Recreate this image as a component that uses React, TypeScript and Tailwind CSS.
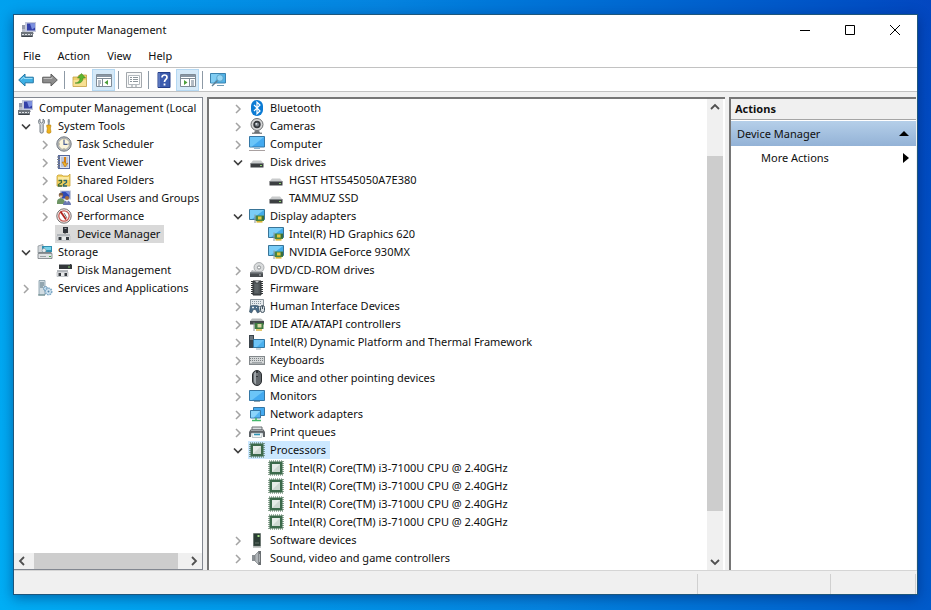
import React, { useState } from "react";

type Node = {
  label: string;
  icon: React.ReactNode;
  open?: boolean;
  leaf?: boolean;
  children?: Node[];
};

type IconProps = { children: React.ReactNode };

function Icon({ children }: IconProps) {
  return (
    <svg className="size-4 shrink-0" viewBox="0 0 16 16" fill="none" aria-hidden="true">
      {children}
    </svg>
  );
}

const computerMgmt = (
  <Icon>
    <path d="M4 0h11v10H4z" fill="#c3c8dc" />
    <path d="M6 1.500h8v7H6z" fill="#3340a8" />
    <path d="M9 1.500h5v4l-3 2z" fill="#7c90e0" />
    <path d="M8 10h4l1 2H7z" fill="#8e93a3" />
    <path d="M1 3h3v7H1z" fill="#b9bdc9" />
    <path d="M1 4h3M1 6h3" stroke="#70778a" />
    <path d="M0 10h12v5H0z" fill="#6e757c" />
    <path d="M1 12.500h2M4 12.500h2M7 12.500h2M10 12.500h1" stroke="#dfe2e6" />
    <path d="M1 14.500h10" stroke="#3c4248" />
  </Icon>
);

const tools = (
  <Icon>
    <path d="M3 1v3l1.500 1L6 4V1c2 1 2 4 .2 5.500V14c0 1.500-3.200 1.500-3.200 0V6.500C1 5 1 2 3 1z" fill="#d3d7da" stroke="#69727a" strokeWidth=".9" />
    <path d="M11 1h1.500l.5 2-.5 4h-1.500l-.5-4z" fill="#8f979d" />
    <path d="M9.800 7h4v2l-.5 1 .7 4c0 1.700-4.200 1.700-4.200 0l.6-4-.6-1z" fill="#eeb21c" stroke="#b47e0c" strokeWidth=".6" />
  </Icon>
);

const clock = (
  <Icon>
    <circle cx="8" cy="8" r="7.200" fill="#b9bec4" stroke="#72787f" />
    <circle cx="8" cy="8" r="5.500" fill="#fbf5dc" stroke="#918f86" strokeWidth=".6" />
    <path d="M8 4v4.300h3.500" stroke="#4b5f94" strokeWidth="1.200" />
    <path d="M8 3v1M8 12v1M3 8h1M12 8h1" stroke="#9a9a90" />
  </Icon>
);

const eventViewer = (
  <Icon>
    <path d="M2 1h12v14H2z" fill="#56689d" />
    <path d="M4 2h9v12H4z" fill="#dfe4ee" />
    <path d="M5 4h7M5 6h7M5 8h7M5 10h7M5 12h7" stroke="#8a97b8" strokeWidth=".8" />
    <path d="M1 3h3M1 5.500h3M1 8h3M1 10.500h3M1 13h3" stroke="#7e838d" />
    <path d="M9 3v6" stroke="#d57c10" strokeWidth="2" />
    <path d="M6 8l3 5 3-4-2 1-1-2z" fill="#f2b325" stroke="#a35e0c" strokeWidth=".5" />
  </Icon>
);

const sharedFolder = (
  <Icon>
    <path d="M1 4l1-1h4l1 1h5l2-2v12H1z" fill="#f2d160" stroke="#c9a23a" strokeWidth=".8" />
    <path d="M2 5h11v3H2z" fill="#fbe9a0" />
    <path d="M2.500 8.500h3v2l-3 2v1.500h3.500" stroke="#3f6b3a" strokeWidth="1.300" />
    <path d="M7.500 8.500h3v2l-3 2v1.500H11" stroke="#2f6a6f" strokeWidth="1.300" />
  </Icon>
);

const users = (
  <Icon>
    <path d="M4 .5h11v9H4z" fill="#c3c9da" />
    <path d="M5.500 1.500h8v7h-8z" fill="#2f49b4" />
    <path d="M9 1.500h4.500v4z" fill="#7c90e0" />
    <circle cx="5" cy="5" r="2.300" fill="#7b5a42" />
    <path d="M3.500 5.500c0 3 3 3 3 0z" fill="#e9bd91" />
    <path d="M1 12c0-5 7-5 8 0v2H1z" fill="#6d9464" />
    <circle cx="11" cy="8" r="2" fill="#a76d3c" />
    <path d="M7 15c0-6 8-6 8 0z" fill="#6a79b3" />
    <path d="M10 10l1 3 1-3z" fill="#fff" />
  </Icon>
);

const performance = (
  <Icon>
    <circle cx="8" cy="8" r="7.200" fill="#f7f2f1" stroke="#746d6d" />
    <circle cx="8" cy="8" r="5.200" fill="#fff" stroke="#c65c55" strokeWidth="1.300" />
    <path d="M4.500 3.500l5.500 8" stroke="#b1231d" strokeWidth="1.800" />
    <path d="M8 5l3 5" stroke="#555" strokeWidth=".8" />
  </Icon>
);

const deviceManager = (
  <Icon>
    <path d="M7 1h5v6H7z" fill="#30343a" />
    <path d="M8.500 2.500h2" stroke="#9ba1a8" />
    <path d="M9 7v2" stroke="#555" />
    <path d="M1 8h13v2H1z" fill="#b4b8bc" />
    <path d="M1 10h13v4.500H1z" fill="#e7e9ea" stroke="#b0b4b7" strokeWidth=".6" />
    <path d="M2.500 11h3v3h-3zM10 11h3v3h-3z" fill="#363b40" />
  </Icon>
);

const storage = (
  <Icon>
    <path d="M1 2l5-1.500v8L1 9z" fill="#d2d7db" stroke="#858c92" strokeWidth=".7" />
    <path d="M5 2h10v6H5z" fill="#318eb0" />
    <path d="M7 3h7v3H8z" fill="#76d1e8" />
    <circle cx="7" cy="6.500" r="2" fill="#e8edf0" stroke="#8a979d" strokeWidth=".6" />
    <path d="M1 9.500h14v5H1z" fill="#dfe2e4" stroke="#757b80" strokeWidth=".8" />
    <path d="M1 9h14l-1-1H2z" fill="#7d858a" />
    <path d="M12 12.500h2" stroke="#47a447" strokeWidth="1.200" />
    <path d="M3 12.500h6" stroke="#9ba1a5" />
  </Icon>
);

const diskMgmt = (
  <Icon>
    <path d="M3 3l1-1h11l1 1v4H3z" fill="#34383b" />
    <path d="M4 2.500h10" stroke="#9a9fa3" />
    <path d="M12 5h2" stroke="#84d06a" />
    <path d="M1 8h11v2H1z" fill="#b4b8bc" />
    <path d="M1 10h11v4.500H1z" fill="#e7e9ea" stroke="#a5aaae" strokeWidth=".6" />
    <path d="M2.500 11H5v3H2.500zM8.500 11H11v3H8.500z" fill="#363b40" />
  </Icon>
);

const services = (
  <Icon>
    <path d="M2 .5h6v14.500H2z" fill="#d1dce2" stroke="#8298a4" strokeWidth=".8" />
    <path d="M3 3h4M3 5h4M3 7h3" stroke="#55707f" />
    <path d="M1 15h7" stroke="#688" />
    <circle cx="8.500" cy="8.500" r="2" fill="#c6dff0" stroke="#739cba" />
    <circle cx="11.500" cy="11.500" r="3.200" fill="#d4e7f4" stroke="#7ba6c4" strokeWidth="1.600" strokeDasharray="1.600 .8" />
    <circle cx="11.500" cy="11.500" r="1" fill="#5484a8" />
  </Icon>
);

const bluetooth = (
  <Icon>
    <rect x="2" width="12" height="16" rx="6" fill="#0b7bd4" />
    <path d="M5 5l6 6-3 2.800V2.200L11 5l-6 6" stroke="#fff" strokeWidth="1.200" />
  </Icon>
);

const camera = (
  <Icon>
    <circle cx="8" cy="6.500" r="6" fill="#d5d6d7" stroke="#6c6f71" />
    <circle cx="8" cy="6.500" r="3.700" fill="#34383c" />
    <circle cx="8" cy="6.500" r="2" fill="#808890" />
    <circle cx="7.300" cy="5.800" r=".9" fill="#e9eef1" />
    <path d="M6 12.500h4l1 2.500H5z" fill="#777b7e" />
    <path d="M3 15.200h10" stroke="#53575a" />
  </Icon>
);

const computer = (
  <Icon>
    <path d="M.5.500h15v10.500H.5z" fill="#44aaf0" stroke="#3577a5" />
    <path d="M1 1h14L3 10.500H1z" fill="#6bc5f8" />
    <path d="M5 12.500h6" stroke="#8ab5d0" />
    <path d="M0 14.500h16" stroke="#a9a1a1" />
  </Icon>
);

const monitor = (
  <Icon>
    <path d="M.5 2.500h15v10H.5z" fill="#44aaf0" stroke="#3577a5" />
    <path d="M1 3h14L3 12H1z" fill="#6bc5f8" />
    <path d="M5 13.500h6" stroke="#8ca4b3" />
  </Icon>
);

const displayAdapter = (
  <Icon>
    <path d="M.5 1.500h15v10H.5z" fill="#43abe9" stroke="#397497" />
    <path d="M1 2h14L3 11H1z" fill="#7acdf7" />
    <path d="M6.500 7.500H15V13H6.500z" fill="#4a8440" />
    <path d="M6 6.500V15" stroke="#8c969c" />
    <path d="M9 8.500h3.500v3H9z" fill="#e1c841" />
    <path d="M7.500 13.800h6" stroke="#d7b32f" strokeWidth="1.600" />
    <path d="M13.500 8h1v4h-1z" fill="#2d5a32" />
  </Icon>
);

const disk = (
  <Icon>
    <path d="M4 6.500h8l2.500 3h-13z" fill="#c9cbcc" />
    <path d="M1.500 9.500h13v4h-13z" fill="#3c3f42" />
    <path d="M1.500 9.500h13" stroke="#7d8184" />
    <path d="M11 11.500h2" stroke="#89d26c" />
  </Icon>
);

const dvd = (
  <Icon>
    <circle cx="10" cy="5.500" r="5" fill="#d9dbdc" stroke="#989c9e" strokeWidth=".8" />
    <circle cx="10" cy="5.500" r="1.600" fill="#fff" stroke="#8b9092" />
    <path d="M3 8l-2 3h13l-2-2H6z" fill="#b4b7b9" />
    <path d="M1 10.500h13V15H1z" fill="#494d50" />
    <path d="M1 11h13" stroke="#7c8184" />
    <path d="M10 13h2" stroke="#bfc4c6" />
  </Icon>
);

const firmware = (
  <Icon>
    <path d="M2 1.500h2M2 3.500h2M2 5.500h2M2 7.500h2M2 9.500h2M2 11.500h2M2 13.500h2M12 1.500h2M12 3.500h2M12 5.500h2M12 7.500h2M12 9.500h2M12 11.500h2M12 13.500h2" stroke="#35393b" />
    <path d="M4 1h8v14H4z" fill="#4d5356" stroke="#2c3032" />
    <path d="M6 1h4L8 3z" fill="#c2c5c7" />
    <path d="M5.500 4h4v9h-4z" fill="#5d6467" />
  </Icon>
);

const hid = (
  <Icon>
    <path d="M1.500 1.500h13v7h-13z" fill="#e5e9ec" stroke="#8d979e" />
    <path d="M3 3.500h10M3 5.500h10" stroke="#87949d" strokeDasharray="1 1" />
    <path d="M.5 14l1-6 2-.5h4l2 .5 1 6-2 1-2-3.500h-2L2.500 15z" fill="#4a6b87" stroke="#34495a" strokeWidth=".6" />
    <path d="M3 9.500h2M4 8.500v2M7 9.500h1" stroke="#fff" strokeWidth=".8" />
    <rect x="11.500" y="7.500" width="4" height="7" rx="2" fill="#d6dde2" stroke="#41525f" />
    <path d="M13.500 8v3" stroke="#41525f" />
  </Icon>
);

const ide = (
  <Icon>
    <path d="M3 2.500h9l3 2.500H1z" fill="#b6b9bb" />
    <path d="M1 5h14v3.500H1z" fill="#45494c" />
    <path d="M5.500 7h9v6h-9z" fill="#3f7b40" />
    <path d="M5 6.500V15" stroke="#8d9396" />
    <path d="M8.500 8h4v3.500h-4z" fill="#d7d7a5" />
    <path d="M7 14h6" stroke="#d5ae32" strokeWidth="1.400" />
  </Icon>
);

const platform = (
  <Icon>
    <path d="M0 1h5v13H0z" fill="#3b444b" />
    <path d="M1 3h3M1 5h3" stroke="#9da9b1" />
    <path d="M4.500 5.500h11v8h-11z" fill="#4bb0ee" stroke="#3477a2" />
    <path d="M5 6h10l-7 7H5z" fill="#6ec4f6" />
    <path d="M7 15h5" stroke="#91a9b8" />
  </Icon>
);

const keyboard = (
  <Icon>
    <path d="M0 4h16v9H0z" fill="#83888b" />
    <path d="M1 5h14v6.500H1z" fill="#d5d8d9" />
    <path d="M1 6.500h14M1 8.500h14" stroke="#7e8386" strokeDasharray="1 1" />
    <path d="M3 10.500h10" stroke="#a0a5a8" />
  </Icon>
);

const mouse = (
  <Icon>
    <rect x="3.500" y=".5" width="9" height="15" rx="4.500" fill="#62676b" stroke="#2a2e31" />
    <path d="M5 4c0-2 2-2.500 2-2.500V14c-1 0-2-2-2-3z" fill="#a0a6aa" />
    <path d="M8 1v6" stroke="#1f2326" strokeWidth="1.400" />
    <path d="M8 3v3" stroke="#d8dbdd" strokeWidth=".8" />
  </Icon>
);

const network = (
  <Icon>
    <path d="M4.500 1.500h11v8h-11z" fill="#44aaf0" stroke="#3577a5" />
    <path d="M1.500 4.500h10V12h-10z" fill="#55b4f2" stroke="#3577a5" />
    <path d="M2 5h9l-6 6.500H2z" fill="#8bd4fb" />
    <path d="M7 12v2M3 14.500h9" stroke="#43b86a" strokeWidth="1.600" />
  </Icon>
);

const printer = (
  <Icon>
    <path d="M3 3h10v3H3z" fill="#d9dddf" stroke="#6b7073" />
    <path d="M1.500 5.500h13L16 8v5h-2V9H2v4H0V8z" fill="#5d6266" />
    <path d="M2 6.500h12" stroke="#9da3a7" />
    <path d="M2.500 9h11l-1 4.500h-9z" fill="#f3f7f8" stroke="#92a2a7" strokeWidth=".6" />
    <path d="M5 10.500h6" stroke="#2f93b4" strokeWidth="1.600" />
  </Icon>
);

const cpu = (
  <Icon>
    <path d="M1 1h14v14H1z" stroke="#456b50" strokeWidth="1.200" strokeDasharray="1 1" />
    <path d="M1.500 1.500h13v13h-13z" fill="#3c6a4b" />
    <path d="M4 4h8v8H4z" fill="#cdd8d1" />
    <path d="M4 12V4h8z" fill="#e6ece8" />
  </Icon>
);

const software = (
  <Icon>
    <path d="M4.500 1.500h7V14h-7z" fill="#2b3d35" stroke="#56615c" strokeWidth=".6" />
    <path d="M8.500 3h2v2h-2z" fill="#a3e286" />
    <path d="M6 11h4" stroke="#65736b" />
    <path d="M4 15h8" stroke="#8f9592" />
  </Icon>
);

const sound = (
  <Icon>
    <path d="M3 5h3v6H3z" fill="#8a9094" />
    <path d="M6 5l4-4v14l-4-4z" fill="#b1b6b9" stroke="#7b8083" strokeWidth=".7" />
    <path d="M9.500 1H12v14H9.500z" fill="#6a6f72" />
    <path d="M10.500 4v8" stroke="#a9aeb1" />
  </Icon>
);

const consoleTree: Node[] = [
  {
    label: "System Tools",
    icon: tools,
    open: true,
    children: [
      { label: "Task Scheduler", icon: clock },
      { label: "Event Viewer", icon: eventViewer },
      { label: "Shared Folders", icon: sharedFolder },
      { label: "Local Users and Groups", icon: users },
      { label: "Performance", icon: performance },
      { label: "Device Manager", icon: deviceManager, leaf: true },
    ],
  },
  {
    label: "Storage",
    icon: storage,
    open: true,
    children: [{ label: "Disk Management", icon: diskMgmt, leaf: true }],
  },
  { label: "Services and Applications", icon: services },
];

const core: Node = { label: "Intel(R) Core(TM) i3-7100U CPU @ 2.40GHz", icon: cpu, leaf: true };

const devices: Node[] = [
  { label: "Bluetooth", icon: bluetooth },
  { label: "Cameras", icon: camera },
  { label: "Computer", icon: computer },
  {
    label: "Disk drives",
    icon: disk,
    open: true,
    children: [
      { label: "HGST HTS545050A7E380", icon: disk, leaf: true },
      { label: "TAMMUZ SSD", icon: disk, leaf: true },
    ],
  },
  {
    label: "Display adapters",
    icon: displayAdapter,
    open: true,
    children: [
      { label: "Intel(R) HD Graphics 620", icon: displayAdapter, leaf: true },
      { label: "NVIDIA GeForce 930MX", icon: displayAdapter, leaf: true },
    ],
  },
  { label: "DVD/CD-ROM drives", icon: dvd },
  { label: "Firmware", icon: firmware },
  { label: "Human Interface Devices", icon: hid },
  { label: "IDE ATA/ATAPI controllers", icon: ide },
  { label: "Intel(R) Dynamic Platform and Thermal Framework", icon: platform },
  { label: "Keyboards", icon: keyboard },
  { label: "Mice and other pointing devices", icon: mouse },
  { label: "Monitors", icon: monitor },
  { label: "Network adapters", icon: network },
  { label: "Print queues", icon: printer },
  { label: "Processors", icon: cpu, open: true, children: [core, core, core, core] },
  { label: "Software devices", icon: software },
  { label: "Sound, video and game controllers", icon: sound },
];

type TreeItemProps = {
  node: Node;
  selected: string;
  selectedClass: string;
  onSelect: (label: string) => void;
};

function TreeItem({ node, selected, selectedClass, onSelect }: TreeItemProps) {
  const [open, setOpen] = useState(Boolean(node.open));

  return (
    <li>
      <div className="flex h-[18px] items-center">
        {node.leaf ? (
          <span className="w-[18px] shrink-0" />
        ) : (
          <button
            type="button"
            aria-label={`Toggle ${node.label}`}
            onClick={() => setOpen(!open)}
            className="flex w-[18px] shrink-0 pl-0.5 pt-0.5"
          >
            <svg className="size-3" viewBox="0 0 12 12" fill="none">
              {open ? (
                <path d="M2 3.500l4 4 4-4" stroke="#3f3f3f" strokeWidth="1.700" />
              ) : (
                <path d="M4 2l4 4-4 4" stroke="#a3a3a3" strokeWidth="1.500" />
              )}
            </svg>
          </button>
        )}
        <button
          type="button"
          onClick={() => onSelect(node.label)}
          className={`flex h-[18px] items-center gap-[5px] whitespace-nowrap pl-px pr-1 ${
            selected === node.label ? selectedClass : ""
          }`}
        >
          {node.icon}
          {node.label}
        </button>
      </div>
      {open && node.children && (
        <ul className="pl-[19px]">
          {node.children.map((child, i) => (
            <TreeItem key={i} node={child} selected={selected} selectedClass={selectedClass} onSelect={onSelect} />
          ))}
        </ul>
      )}
    </li>
  );
}

type ToolProps = { label: string; active?: boolean; children: React.ReactNode };

function Tool({ label, active, children }: ToolProps) {
  return (
    <button
      type="button"
      aria-label={label}
      className={`flex h-[22px] w-[23px] items-center justify-center border ${
        active ? "border-[#b5d8f2] bg-[#d5e9f8]" : "border-transparent"
      }`}
    >
      {children}
    </button>
  );
}

function Separator() {
  return <span className="mx-0.5 mb-0.5 h-[18px] w-px bg-[#8d99a5]" />;
}

function ScrollArrow({ label, d }: { label: string; d: string }) {
  return (
    <button type="button" aria-label={label} className="flex size-4 shrink-0 items-center justify-center">
      <svg className="size-3" viewBox="0 0 12 12" fill="none">
        <path d={d} stroke="#505050" strokeWidth="1.800" />
      </svg>
    </button>
  );
}

export default function App() {
  const [consoleItem, setConsoleItem] = useState("Device Manager");
  const [device, setDevice] = useState("Processors");

  return (
    <div className="flex h-screen flex-col bg-linear-75 from-[#00aef5] via-[#0583df] to-[#0347c0] px-[13px] pb-[15px] pt-[14px] font-['Noto_Sans',sans-serif] text-[11px] leading-[18px] text-[#101010]">
      <main className="flex min-h-0 flex-1 flex-col border border-[#1d567c] bg-[#f0f0f0] shadow-[0_3px_12px_rgba(0,20,80,0.45)]">
        <header className="flex h-[30px] items-center bg-white pl-[7px]">
          {computerMgmt}
          <h1 className="ml-[5px] flex-1">Computer Management</h1>
          <button type="button" aria-label="Minimize" className="flex w-[45px] justify-center">
            <svg className="size-3" viewBox="0 0 12 12">
              <path d="M1 6.500h10" stroke="#000" />
            </svg>
          </button>
          <button type="button" aria-label="Maximize" className="flex w-[45px] justify-center">
            <svg className="size-3" viewBox="0 0 12 12" fill="none">
              <path d="M1.500 1.500h9v9h-9z" stroke="#000" />
            </svg>
          </button>
          <button type="button" aria-label="Close" className="flex w-[45px] justify-center">
            <svg className="size-3" viewBox="0 0 12 12">
              <path d="M1 1l10 10M11 1L1 11" stroke="#000" />
            </svg>
          </button>
        </header>

        <nav className="flex h-[22px] items-center gap-[17px] bg-white pl-[9px]">
          <button type="button">File</button>
          <button type="button">Action</button>
          <button type="button">View</button>
          <button type="button">Help</button>
        </nav>

        <div className="flex h-[25px] items-end gap-px border-y border-[#c2c2c2] bg-white">
          <Tool label="Back">
            <Icon>
              <path d="M.7 8L7 2v3.200h8.300v5.600H7V14z" fill="#3fb0e4" stroke="#2377a5" />
              <path d="M3 7.500L6 5v1.500h8.500" stroke="#9adbf6" />
            </Icon>
          </Tool>
          <Tool label="Forward">
            <Icon>
              <path d="M15.300 8L9 2v3.200H.7v5.600H9V14z" fill="#8c8c8c" stroke="#5d5d5d" />
              <path d="M1.500 6.500H10V5" stroke="#bcbcbc" />
            </Icon>
          </Tool>
          <Separator />
          <Tool label="Up one level">
            <Icon>
              <path d="M1 5h5l1-2h7.500v11.500H1z" fill="#efd06d" stroke="#c3a044" strokeWidth=".8" />
              <path d="M1.500 8H14v6H1.500z" fill="#f8e092" />
              <path d="M3 11c3 0 5-2 5-5H5.500L9.500 1.500 13.500 6H11c0 4-3 6-8 5z" fill="#5cb531" stroke="#398019" strokeWidth=".5" />
            </Icon>
          </Tool>
          <Tool label="Show or hide console tree" active>
            <Icon>
              <path d="M.5 2.500h15v12H.5z" fill="#fff" stroke="#7f8b96" />
              <path d="M1 3h14v2H1z" fill="#8996a4" />
              <path d="M1 6.500h14M6.500 7v7" stroke="#7f8b96" />
              <path d="M2 9h3M2 11h3M2 13h2" stroke="#68788b" />
              <path d="M12 8v5l-3.500-2.500z" fill="#4c9e3a" />
            </Icon>
          </Tool>
          <Separator />
          <Tool label="Properties">
            <Icon>
              <path d="M.5.500h15v15H.5z" fill="#f9f9f9" stroke="#a3a8ad" />
              <path d="M2.500 3.500h11v9h-11z" fill="#fff" stroke="#b4babf" />
              <path d="M4 5.500h2M7 5.500h5M4 7.500h2M7 7.500h5M4 9.500h2M7 9.500h5M5 14h2M9 14h2" stroke="#8b949a" />
            </Icon>
          </Tool>
          <Separator />
          <Tool label="Help">
            <Icon>
              <path d="M2 .5h12v15H2z" fill="#3c5cae" stroke="#253f89" />
              <path d="M3 1v14" stroke="#7892d1" />
              <path d="M6 5.500c0-3.500 5-3 5-.3C11 7.500 8.500 7.300 8.500 10" stroke="#fff" strokeWidth="1.700" />
              <path d="M7.600 11.500h1.800v2H7.600z" fill="#fff" />
            </Icon>
          </Tool>
          <Tool label="Show or hide action pane" active>
            <Icon>
              <path d="M.5 2.500h15v12H.5z" fill="#fff" stroke="#7f8b96" />
              <path d="M1 3h14v2H1z" fill="#8996a4" />
              <path d="M1 6.500h14M9.500 7v7" stroke="#7f8b96" />
              <path d="M11 9h3M11 11h3M11 13h3" stroke="#68788b" />
              <path d="M4 8v5l3.500-2.500z" fill="#4c9e3a" />
            </Icon>
          </Tool>
          <Separator />
          <Tool label="Scan for hardware changes">
            <Icon>
              <path d="M.5 1.500h15v9.500H.5z" fill="#51b2e7" stroke="#3b83af" />
              <path d="M1 2h9l-6 8.500H1z" fill="#80cdf3" />
              <circle cx="10" cy="6" r="3.300" fill="#b4e5fa" fillOpacity=".7" stroke="#5ba3c9" />
              <path d="M7.500 8.500L2 14" stroke="#5d7f94" strokeWidth="1.400" />
              <path d="M7 13.500h7" stroke="#729bb2" />
            </Icon>
          </Tool>
        </div>

        <div className="flex min-h-0 flex-1 gap-1 pr-px pt-[5px]">
          <section className="flex w-[189px] shrink-0 flex-col overflow-hidden border-y border-r border-[#828790] bg-white">
            <div className="min-h-0 flex-1 overflow-hidden pl-[3px] pt-px">
              <button type="button" className="flex h-[18px] items-center gap-[5px] whitespace-nowrap pl-px">
                {computerMgmt}
                Computer Management (Local
              </button>
              <ul className="pl-px">
                {consoleTree.map((node) => (
                  <TreeItem
                    key={node.label}
                    node={node}
                    selected={consoleItem}
                    selectedClass="bg-[#d9d9d9]"
                    onSelect={setConsoleItem}
                  />
                ))}
              </ul>
            </div>
            <div className="flex h-4 items-center bg-[#f0f0f0]">
              <ScrollArrow label="Scroll left" d="M8 2L4 6l4 4" />
              <div className="h-full flex-1 pl-1 pr-2">
                <div className="h-full bg-[#cdcdcd]" />
              </div>
              <ScrollArrow label="Scroll right" d="M4 2l4 4-4 4" />
            </div>
          </section>

          <section className="flex min-w-0 flex-1 border-l-2 border-t-2 border-[#767676] bg-white pr-0.5">
            <ul className="min-w-0 flex-1 overflow-hidden pl-[21px]">
              {devices.map((node) => (
                <TreeItem
                  key={node.label}
                  node={node}
                  selected={device}
                  selectedClass="bg-[#cce8ff]"
                  onSelect={setDevice}
                />
              ))}
            </ul>
            <div className="flex w-4 flex-col items-center bg-[#f0f0f0]">
              <ScrollArrow label="Scroll up" d="M2 8l4-4 4 4" />
              <div className="flex w-full flex-1 flex-col">
                <div className="flex-[41]" />
                <div className="flex-[354] bg-[#cdcdcd]" />
                <div className="flex-[43]" />
              </div>
              <ScrollArrow label="Scroll down" d="M2 4l4 4 4-4" />
            </div>
          </section>

          <aside className="w-[187px] shrink-0 border-l-2 border-t-2 border-[#767676] bg-white">
            <h2 className="h-[21px] border-b border-[#a5a5a5] bg-[#f0f0f0] pl-1 pt-px font-bold">Actions</h2>
            <button
              type="button"
              className="mt-px flex h-[25px] w-full items-center justify-between bg-linear-to-b from-[#b5cfe9] to-[#93b2d6] pl-1.5 pr-[7px]"
            >
              Device Manager
              <svg className="h-[5px] w-[10px]" viewBox="0 0 10 5">
                <path d="M5 0l5 5H0z" fill="#000" />
              </svg>
            </button>
            <button type="button" className="flex h-6 w-full items-center justify-between pl-[30px] pr-[7px]">
              More Actions
              <svg className="h-[10px] w-[6px]" viewBox="0 0 6 10">
                <path d="M0 0l6 5-6 5z" fill="#000" />
              </svg>
            </button>
          </aside>
        </div>

        <footer className="flex h-6 border-t border-[#d5d5d5] pr-px pt-[3px]">
          <span className="flex-1" />
          <span className="w-[133px] border-l border-[#d0d0d0]" />
          <span className="w-[86px] border-x border-[#d0d0d0]" />
        </footer>
      </main>
    </div>
  );
}
